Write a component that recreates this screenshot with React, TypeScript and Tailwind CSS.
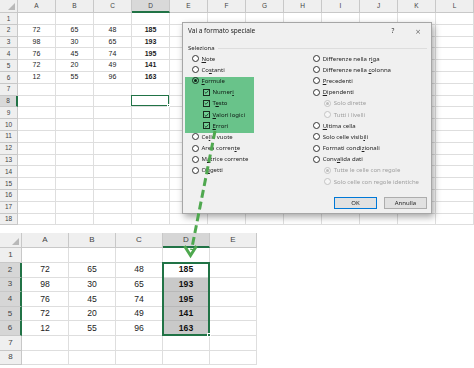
import React from 'react';

const data = [
  [72, 65, 48, 185],
  [98, 30, 65, 193],
  [76, 45, 74, 195],
  [72, 20, 49, 141],
  [12, 55, 96, 163],
];

const topCols = ['A', 'B', 'C', 'D', 'E', 'F', 'G', 'H', 'I', 'J', 'K', 'L'];
const botCols = ['A', 'B', 'C', 'D', 'E'];

function Corner() {
  return (
    <div className="bg-[#efefef] border-r border-b border-[#c8c8c8] flex items-end justify-end pr-[2px] pb-[2px]">
      <svg width="7" height="7" viewBox="0 0 7 7">
        <polygon points="7,0 7,7 0,7" fill="#b8b8b8" />
      </svg>
    </div>
  );
}

function TopSheet() {
  const cells: React.ReactNode[] = [<Corner key="corner" />];
  topCols.forEach((c) =>
    cells.push(
      <div
        key={'h' + c}
        className={
          c === 'D'
            ? 'bg-[#d9d9d9] border-r border-[#c8c8c8] border-b-2 border-b-[#217346] flex items-center justify-center text-[6.5px] text-[#444]'
            : 'bg-[#efefef] border-r border-b border-[#c8c8c8] flex items-center justify-center text-[6.5px] text-[#444]'
        }
      >
        {c}
      </div>
    )
  );
  for (let r = 1; r <= 18; r++) {
    cells.push(
      <div
        key={'r' + r}
        className={
          r === 8
            ? 'bg-[#d9d9d9] border-r-2 border-r-[#217346] border-b border-[#c8c8c8] flex items-center justify-center text-[6.5px] text-[#444]'
            : 'bg-[#efefef] border-r border-b border-[#c8c8c8] flex items-center justify-center text-[6.5px] text-[#444]'
        }
      >
        {r}
      </div>
    );
    topCols.forEach((c, ci) => {
      const v = r >= 2 && r <= 6 && ci < 4 ? data[r - 2][ci] : null;
      const selected = r === 8 && c === 'D';
      cells.push(
        <div
          key={'c' + r + c}
          className={
            ci === 3
              ? 'relative border-r border-b border-[#dedede] flex items-center justify-center text-[7px] font-bold text-[#1a1a1a]'
              : 'border-r border-b border-[#dedede] flex items-center justify-center text-[7px] text-[#222]'
          }
        >
          {v}
          {selected && (
            <div className="absolute -left-[1px] -top-[1px] -right-[0px] -bottom-[0px] border-[1.5px] border-[#217346] z-10">
              <div className="absolute -right-[2px] -bottom-[2px] w-[3px] h-[3px] bg-[#217346] border border-white" />
            </div>
          )}
        </div>
      );
    });
  }
  return (
    <div className="grid grid-cols-[18px_repeat(12,38px)] grid-rows-[13px_repeat(18,11.8px)] w-[474px] h-[225.4px] overflow-hidden">
      {cells}
    </div>
  );
}

function BottomSheet() {
  const cells: React.ReactNode[] = [<Corner key="corner" />];
  botCols.forEach((c) =>
    cells.push(
      <div
        key={'h' + c}
        className={
          c === 'D'
            ? 'bg-[#d6d6d6] border-r border-[#c8c8c8] border-b-2 border-b-[#217346] flex items-center justify-center text-[8px] text-[#444]'
            : 'bg-[#efefef] border-r border-b border-[#c8c8c8] flex items-center justify-center text-[8px] text-[#444]'
        }
      >
        {c}
      </div>
    )
  );
  for (let r = 1; r <= 8; r++) {
    const inSel = r >= 2 && r <= 6;
    cells.push(
      <div
        key={'r' + r}
        className={
          inSel
            ? 'bg-[#d6d6d6] border-r-2 border-r-[#217346] border-b border-[#c8c8c8] flex items-center justify-center text-[8px] text-[#444]'
            : 'bg-[#efefef] border-r border-b border-[#c8c8c8] flex items-center justify-center text-[8px] text-[#444]'
        }
      >
        {r}
      </div>
    );
    botCols.forEach((c, ci) => {
      const v = inSel && ci < 4 ? data[r - 2][ci] : null;
      let cls = 'border-r border-b border-[#dedede] flex items-center justify-center text-[8.6px] text-[#222]';
      if (ci === 3 && r === 2) cls = 'relative border-r border-b border-[#dedede] flex items-center justify-center text-[8.6px] font-bold text-[#111]';
      else if (ci === 3 && inSel) cls = 'bg-[#c9c9c9] border-r border-b border-[#b8b8b8] flex items-center justify-center text-[8.6px] font-bold text-[#111]';
      cells.push(
        <div key={'c' + r + c} className={cls}>
          {v}
          {ci === 3 && r === 2 && (
            <div className="absolute -left-[1px] -top-[1px] w-[48px] h-[74px] border-2 border-[#217346] z-10">
              <div className="absolute -right-[3px] -bottom-[3px] w-[4px] h-[4px] bg-[#217346] border border-white" />
            </div>
          )}
        </div>
      );
    });
  }
  return (
    <div className="mt-[8px] grid grid-cols-[22px_repeat(5,47px)] grid-rows-[15px_repeat(8,14.6px)] w-[257px]">
      {cells}
    </div>
  );
}

function Label({ text, u }: { text: string; u?: number }) {
  if (u === undefined) return <span>{text}</span>;
  return (
    <span>
      {text.slice(0, u)}
      <span className="underline underline-offset-[1px]">{text.slice(u, u + 1)}</span>
      {text.slice(u + 1)}
    </span>
  );
}

function Radio({ checked, disabled }: { checked?: boolean; disabled?: boolean }) {
  return (
    <span
      className={
        disabled
          ? 'w-[7px] h-[7px] rounded-full border border-[#c4c4c4] bg-[#f6f6f6] flex items-center justify-center shrink-0'
          : 'w-[7px] h-[7px] rounded-full border border-[#333] bg-white flex items-center justify-center shrink-0'
      }
    >
      {checked && (
        <span className={disabled ? 'w-[3px] h-[3px] rounded-full bg-[#bcbcbc]' : 'w-[3px] h-[3px] rounded-full bg-[#222]'} />
      )}
    </span>
  );
}

function Check() {
  return (
    <span className="w-[7px] h-[7px] border border-[#333] bg-white flex items-center justify-center shrink-0">
      <svg width="6" height="6" viewBox="0 0 6 6">
        <polyline points="0.8,3 2.4,4.6 5.3,1.2" fill="none" stroke="#222" strokeWidth="0.9" />
      </svg>
    </span>
  );
}

type Item = {
  text: string;
  u?: number;
  kind: 'radio' | 'check';
  indent?: boolean;
  checked?: boolean;
  disabled?: boolean;
};

const leftItems: Item[] = [
  { text: 'Note', u: 0, kind: 'radio' },
  { text: 'Costanti', u: 2, kind: 'radio' },
  { text: 'Formule', u: 0, kind: 'radio', checked: true },
  { text: 'Numeri', u: 5, kind: 'check', indent: true },
  { text: 'Testo', u: 1, kind: 'check', indent: true },
  { text: 'Valori logici', u: 0, kind: 'check', indent: true },
  { text: 'Errori', u: 0, kind: 'check', indent: true },
  { text: 'Celle vuote', u: 2, kind: 'radio' },
  { text: 'Area corrente', u: 11, kind: 'radio' },
  { text: 'Matrice corrente', u: 1, kind: 'radio' },
  { text: 'Oggetti', u: 1, kind: 'radio' },
];

const rightItems: Item[] = [
  { text: 'Differenze nella riga', u: 18, kind: 'radio' },
  { text: 'Differenze nella colonna', u: 17, kind: 'radio' },
  { text: 'Precedenti', u: 0, kind: 'radio' },
  { text: 'Dipendenti', u: 0, kind: 'radio' },
  { text: 'Solo dirette', kind: 'radio', indent: true, checked: true, disabled: true },
  { text: 'Tutti i livelli', kind: 'radio', indent: true, disabled: true },
  { text: 'Ultima cella', u: 0, kind: 'radio' },
  { text: 'Solo celle visibili', u: 16, kind: 'radio' },
  { text: 'Formati condizionali', u: 13, kind: 'radio' },
  { text: 'Convalida dati', u: 4, kind: 'radio' },
  { text: 'Tutte le celle con regole', kind: 'radio', indent: true, checked: true, disabled: true },
  { text: 'Solo celle con regole identiche', kind: 'radio', indent: true, disabled: true },
];

function Row({ it }: { it: Item }) {
  return (
    <div
      className={
        (it.indent ? 'pl-[11px] ' : '') +
        (it.disabled ? 'h-[11.2px] flex items-center gap-[3px] text-[#a0a0a0]' : 'h-[11.2px] flex items-center gap-[3px]')
      }
    >
      {it.kind === 'radio' ? <Radio checked={it.checked} disabled={it.disabled} /> : <Check />}
      <Label text={it.text} u={it.u} />
    </div>
  );
}

function Dialog() {
  return (
    <div className="absolute left-[182px] top-[22px] w-[250px] h-[192px] bg-[#f0f0f0] border border-[#a6a6a6] shadow-[2px_3px_7px_rgba(0,0,0,0.35)] font-['Noto_Sans',sans-serif] text-[#1e1e1e] leading-none z-10">
      <div className="h-[16px] flex items-center pl-[5px] text-[6.5px]">
        <span>Vai a formato speciale</span>
        <span className="ml-auto w-[10px] text-center text-[6.5px] text-[#333]">?</span>
        <span className="ml-[16px] mr-[9px] w-[8px] text-center text-[9px] font-light text-[#333]">×</span>
      </div>
      <div className="pl-[5px] pr-[4px] pt-[4px] text-[6px]">
        <div className="h-[10px] flex items-center gap-[3px]">
          <span>Seleziona</span>
          <div className="flex-1 h-px bg-[#dddddd]" />
        </div>
        <div className="flex pl-[3.5px]">
          <div className="w-[121.2px] flex flex-col">
            {leftItems.map((it) => (
              <Row key={it.text} it={it} />
            ))}
          </div>
          <div className="flex flex-col">
            {rightItems.map((it) => (
              <Row key={it.text} it={it} />
            ))}
          </div>
        </div>
        <div className="mt-[9.6px] flex justify-end gap-[7px]">
          <div className="w-[43px] h-[12px] border border-[#0078d7] bg-[#e1e1e1] flex items-center justify-center">OK</div>
          <div className="w-[43px] h-[12px] border border-[#adadad] bg-[#e1e1e1] flex items-center justify-center">Annulla</div>
        </div>
      </div>
      <div className="absolute left-[2px] top-[54px] w-[69px] h-[56px] bg-[#6fcf93] mix-blend-multiply" />
    </div>
  );
}

function Arrow() {
  return (
    <svg className="absolute left-0 top-0 z-20 pointer-events-none" width="474" height="368" viewBox="0 0 474 368">
      <line x1="215" y1="131" x2="191.5" y2="250" stroke="#4fa84f" strokeWidth="3" strokeDasharray="8 4" />
      <polyline points="184.5,246 190.5,255.5 196.5,246" fill="none" stroke="#4fa84f" strokeWidth="3" strokeLinejoin="miter" />
    </svg>
  );
}

export default function App() {
  return (
    <div className="relative w-[474px] h-[368px] bg-white overflow-hidden font-['Liberation_Sans',Arial,sans-serif]">
      <TopSheet />
      <BottomSheet />
      <Dialog />
      <Arrow />
    </div>
  );
}
